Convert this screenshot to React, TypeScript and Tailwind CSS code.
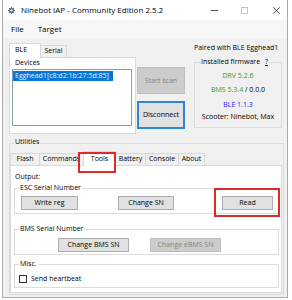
import React from "react";

function Btn({
  children,
  className = "",
}: {
  children: React.ReactNode;
  className?: string;
}) {
  return (
    <div
      className={
        "flex items-center justify-center border border-[#adadad] bg-[#e1e1e1] text-black whitespace-nowrap " +
        className
      }
    >
      {children}
    </div>
  );
}

function DisabledBtn({
  children,
  className = "",
}: {
  children: React.ReactNode;
  className?: string;
}) {
  return (
    <div
      className={
        "flex items-center justify-center border border-[#bfbfbf] bg-[#cccccc] text-[#838383] whitespace-nowrap " +
        className
      }
    >
      {children}
    </div>
  );
}

export default function App() {
  return (
    <div className="w-[292px] h-[300px] bg-white overflow-hidden font-['Open_Sans','Liberation_Sans',sans-serif] text-[7px] leading-[10px] text-black">
      <div className="ml-[2px] w-[286px] h-[298px] border-x border-b border-[#a9a9a9] flex flex-col">
        {/* Title bar */}
        <div className="h-[20px] shrink-0 bg-white flex items-center">
          <svg className="ml-[5px]" width="7" height="7" viewBox="0 0 14 14">
            <g fill="#56677f">
              <circle cx="7" cy="7" r="5.2" />
              <rect x="6" y="0" width="2" height="3" />
              <rect x="6" y="11" width="2" height="3" />
              <rect x="0" y="6" width="3" height="2" />
              <rect x="11" y="6" width="3" height="2" />
              <rect x="6" y="0" width="2" height="3" transform="rotate(45 7 7)" />
              <rect x="6" y="11" width="2" height="3" transform="rotate(45 7 7)" />
              <rect x="0" y="6" width="3" height="2" transform="rotate(45 7 7)" />
              <rect x="11" y="6" width="3" height="2" transform="rotate(45 7 7)" />
            </g>
            <circle cx="7" cy="7" r="2.4" fill="#e8edf3" />
          </svg>
          <span className="ml-[6px] text-[8px]">Ninebot IAP - Community Edition 2.5.2</span>
          <div className="ml-auto flex items-center">
            <svg className="mr-[23px]" width="7" height="7" viewBox="0 0 7 7">
              <line x1="0" y1="3.5" x2="7" y2="3.5" stroke="#222" strokeWidth="0.8" />
            </svg>
            <svg className="mr-[25px]" width="7" height="7" viewBox="0 0 7 7">
              <rect x="0.5" y="0.5" width="6" height="6" fill="none" stroke="#b5b5b5" strokeWidth="0.8" />
            </svg>
            <svg className="mr-[7px]" width="7" height="7" viewBox="0 0 7 7">
              <line x1="0.3" y1="0.3" x2="6.7" y2="6.7" stroke="#222" strokeWidth="0.8" />
              <line x1="6.7" y1="0.3" x2="0.3" y2="6.7" stroke="#222" strokeWidth="0.8" />
            </svg>
          </div>
        </div>

        {/* Menu bar */}
        <div className="h-[18px] shrink-0 bg-[#f7f7f7] flex items-center text-[8px]">
          <span className="ml-[8px]">File</span>
          <span className="ml-[14px]">Target</span>
        </div>

        {/* Body */}
        <div className="flex-1 bg-[#f0f0f0] flex flex-col">
          {/* Top section */}
          <div className="h-[105px] shrink-0 flex items-start">
            {/* BLE / Serial tab control */}
            <div className="ml-[6px] mt-[5px] w-[127px] flex flex-col">
              <div className="h-[14px] flex items-end">
                <div className="relative z-10 -mb-[1px] h-[15px] w-[32px] bg-white border-t border-x border-[#d9d9d9] pl-[5px] pt-[1px]">
                  BLE
                </div>
                <div className="h-[12px] w-[26px] bg-[#f0f0f0] border-t border-r border-[#d9d9d9] flex justify-center">
                  Serial
                </div>
              </div>
              <div className="h-[77px] bg-white border border-[#d9d9d9] flex flex-col">
                <div className="ml-[5px]">Devices</div>
                <div className="mt-[1px] ml-[2px] w-[120px] h-[57px] border border-[#8d9bab] bg-white pt-[1px]">
                  <div className="w-[100px] h-[10px] bg-[#0078d7] text-[#e8f1fb] pl-[2px] whitespace-nowrap overflow-hidden leading-[10px]">
                    Egghead1[c8:d2:1b:27:5d:85]
                  </div>
                </div>
              </div>
            </div>

            {/* Scan buttons */}
            <div className="ml-[1px] mt-[29px] flex flex-col gap-[7px]">
              <DisabledBtn className="w-[48px] h-[27px]">Start scan</DisabledBtn>
              <div className="w-[48px] h-[28px] flex items-center justify-center border-2 border-[#2f86d6] bg-[#e1e1e1]">
                Disconnect
              </div>
            </div>

            {/* Info */}
            <div className="ml-[9px] w-[88px] flex flex-col">
              <div className="mt-[5px] whitespace-nowrap">Paired with BLE Egghead1</div>
              <div className="mt-[9px] h-[66px] border border-[#dcdcdc] flex flex-col items-center">
                <div className="self-start -mt-[6px] ml-[5px] px-[1px] bg-[#f0f0f0] whitespace-nowrap">
                  Installed firmware <span className="ml-[3px] text-[#0000ff] underline">?</span>
                </div>
                <div className="mt-[4px] text-[#2e9e2e]">DRV 5.2.6</div>
                <div className="mt-[4px]">
                  <span className="text-[#2e9e2e]">BMS 5.3.4</span> / 0.0.0
                </div>
                <div className="mt-[5px] text-[#1a1aff]">BLE 1.1.3</div>
                <div className="mt-[2px] whitespace-nowrap">Scooter: Ninebot, Max</div>
              </div>
            </div>
          </div>

          {/* Utilities group */}
          <div className="ml-[6px] w-[275px] h-[152px] border border-[#dcdcdc] flex flex-col">
            <div className="-mt-[7px] ml-[4px] px-[1px] w-fit bg-[#f0f0f0]">Utilities</div>
            <div className="mt-[4px] w-[272px] flex flex-col">
              <div className="h-[14px] flex items-end">
                <div className="h-[12px] w-[30px] border-t border-x border-[#d9d9d9] flex justify-center">Flash</div>
                <div className="-ml-[1px] h-[12px] w-[45px] border-t border-x border-[#d9d9d9] flex justify-center">Commands</div>
                <div className="relative z-10 -ml-[1px] -mb-[1px] h-[15px] w-[33px] bg-white border-t border-x border-[#d9d9d9] flex justify-center pt-[2px]">
                  Tools
                  <div className="absolute left-[-6px] right-[-1px] top-0 bottom-[-7px] border-2 border-[#e02a2a]" />
                </div>
                <div className="-ml-[1px] h-[12px] w-[31px] border-t border-x border-[#d9d9d9] flex justify-center">Battery</div>
                <div className="-ml-[1px] h-[12px] w-[34px] border-t border-x border-[#d9d9d9] flex justify-center">Console</div>
                <div className="-ml-[1px] h-[12px] w-[27px] border-t border-x border-[#d9d9d9] flex justify-center">About</div>
              </div>
              <div className="h-[128px] bg-white border border-[#d9d9d9] flex flex-col">
                <div className="ml-[4px] mt-[6px]">Output:</div>

                {/* ESC Serial Number */}
                <div className="ml-[3px] mt-[6px] w-[265px] h-[26px] border border-[#dcdcdc] flex flex-col">
                  <div className="-mt-[6px] ml-[4px] px-[1px] w-fit bg-white">ESC Serial Number</div>
                  <div className="mt-[3px] flex">
                    <Btn className="ml-[6px] w-[57px] h-[14px]">Write reg</Btn>
                    <Btn className="ml-[40px] w-[56px] h-[14px]">Change SN</Btn>
                    <div className="relative ml-[48px]">
                      <Btn className="w-[51px] h-[14px]">Read</Btn>
                      <div className="absolute left-[-8px] right-[-7px] top-[-8px] bottom-[-7px] border-2 border-[#e02a2a]" />
                    </div>
                  </div>
                </div>

                {/* BMS Serial Number */}
                <div className="ml-[3px] mt-[15px] w-[265px] h-[26px] border border-[#dcdcdc] flex flex-col">
                  <div className="-mt-[6px] ml-[4px] px-[1px] w-fit bg-white">BMS Serial Number</div>
                  <div className="mt-[4px] flex">
                    <Btn className="ml-[43px] w-[71px] h-[14px]">Change BMS SN</Btn>
                    <DisabledBtn className="ml-[21px] w-[71px] h-[14px]">Change eBMS SN</DisabledBtn>
                  </div>
                </div>

                {/* Misc */}
                <div className="ml-[3px] mt-[9px] w-[265px] h-[24px] border border-[#dcdcdc] flex flex-col">
                  <div className="-mt-[6px] ml-[4px] px-[1px] w-fit bg-white">Misc.</div>
                  <div className="mt-[5px] flex items-center">
                    <div className="ml-[4px] w-[8px] h-[8px] border border-[#333333] bg-white" />
                    <span className="ml-[4px]">Send heartbeat</span>
                  </div>
                </div>
              </div>
            </div>
          </div>
        </div>
      </div>
    </div>
  );
}
